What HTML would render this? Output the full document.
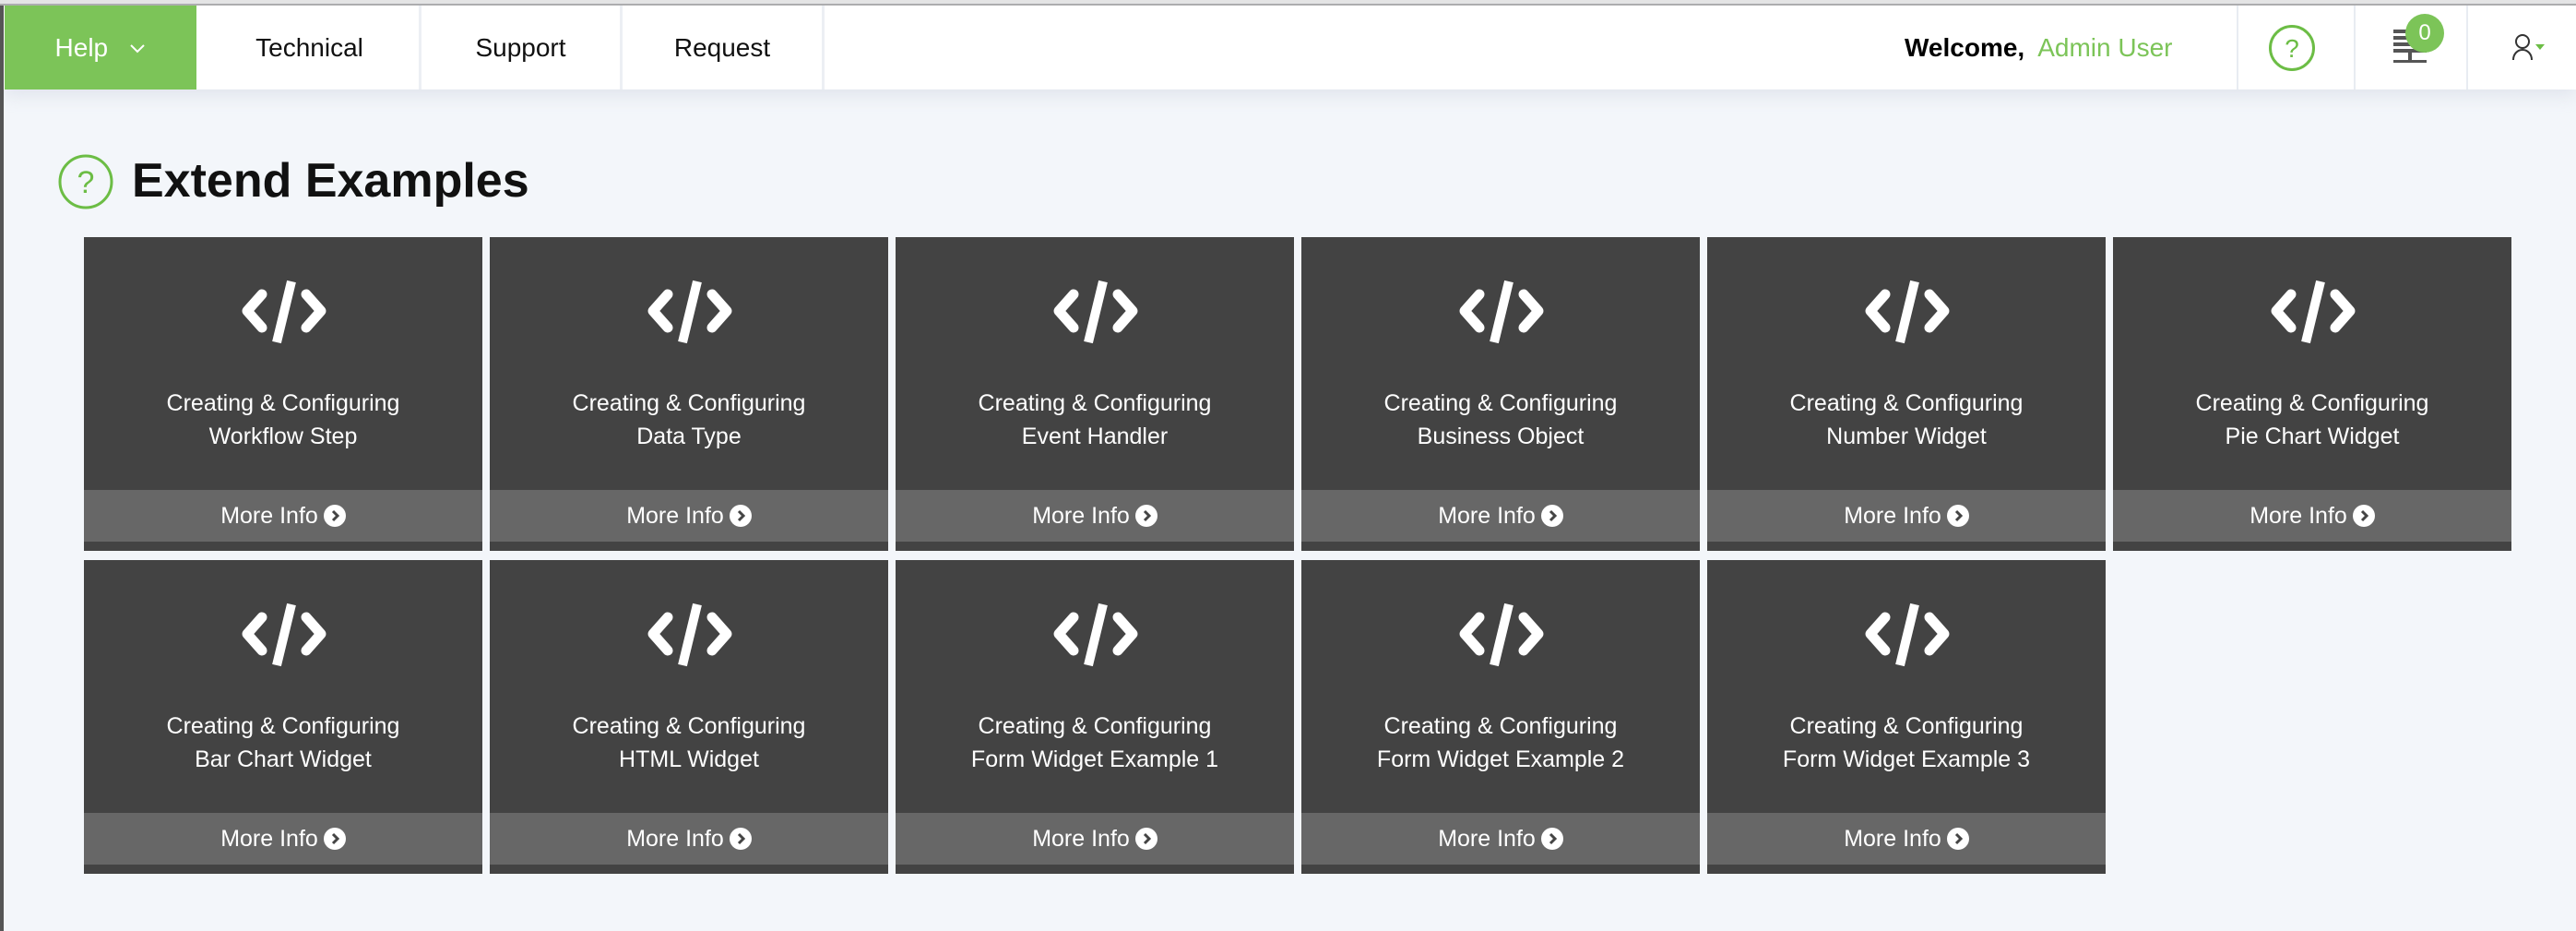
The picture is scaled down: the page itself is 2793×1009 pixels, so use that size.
<!DOCTYPE html>
<html><head><meta charset="utf-8"><style>
*{margin:0;padding:0;box-sizing:border-box}
body{width:2793px;height:1009px;overflow:hidden;background:#f3f6fa;font-family:"Liberation Sans",sans-serif;position:relative}
.topbar{position:absolute;left:0;top:0;width:2793px;height:6px;background:#e6e6e6;border-bottom:2px solid #aaa}
.leftline{position:absolute;left:0;top:6px;width:4px;height:1003px;background:#555}
.nav{position:absolute;left:4px;top:6px;width:2789px;height:91px;background:#fff;box-shadow:0 6px 18px rgba(200,205,220,.45)}
.nav .it{position:absolute;top:0;height:91px;display:flex;align-items:center;justify-content:center;font-size:28px;color:#111;border-right:3px solid #eceff4}
.help{background:#7cc458;color:#fff!important;border:none!important}
.sep{position:absolute;top:0;width:2px;height:91px;background:#e8ecf2}
h1{position:absolute;left:143px;top:166px;font-size:52px;font-weight:bold;color:#111;letter-spacing:0px}
.card{position:absolute;width:432px;height:340px;background:#434343;color:#fff;text-align:center}
.card svg.code{position:absolute;left:171px;top:44px}
.card .t{position:absolute;left:0;top:162px;width:100%;font-size:25px;line-height:36px}
.card .b{position:absolute;left:0;top:274px;width:100%;height:56px;background:#676767;font-size:25px;line-height:56px}
.card .b svg{display:inline-block;vertical-align:-4px;margin-left:6px}
</style></head><body>
<div class="topbar"></div>
<div class="nav">
 <div class="it help" style="left:1px;width:208px">Help&nbsp;&nbsp;&nbsp;<svg width="18" height="12" viewBox="0 0 18 12"><path d="M2 3l7 7 7-7" stroke="#fff" stroke-width="2" fill="none"/></svg></div>
 <div class="it" style="left:213px;width:240px">Technical</div>
 <div class="it" style="left:453px;width:218px">Support</div>
 <div class="it" style="left:671px;width:219px">Request</div>
 <div style="position:absolute;left:2061px;top:0;height:91px;line-height:91px;font-size:28px"><b>Welcome,</b>&nbsp; <span style="color:#7cc458">Admin User</span></div>
 <div class="sep" style="left:2421px"></div>
 <div class="sep" style="left:2548px"></div>
 <div class="sep" style="left:2670px"></div>
 <svg style="position:absolute;left:2455px;top:20px" width="52" height="52" viewBox="0 0 52 52"><circle cx="26" cy="26" r="23.5" stroke="#6cbd45" stroke-width="3" fill="none"/><text x="26" y="36" text-anchor="middle" font-family="Liberation Sans" font-size="28" fill="#6cbd45">?</text></svg>
 <svg style="position:absolute;left:2591px;top:26px" width="40" height="40" viewBox="0 0 40 40"><g fill="#555"><rect x="0" y="0" width="36" height="4"/><rect x="0" y="7" width="36" height="4"/><rect x="0" y="14" width="36" height="4"/><rect x="0" y="21" width="36" height="4"/><rect x="16" y="25" width="4" height="8"/><rect x="0" y="33" width="36" height="3"/></g></svg>
 <div style="position:absolute;left:2604px;top:9px;width:42px;height:42px;border-radius:50%;background:#7cc458;color:#fff;font-size:24px;line-height:42px;text-align:center">0</div>
 <svg style="position:absolute;left:2718px;top:30px" width="42" height="32" viewBox="0 0 42 32"><circle cx="13" cy="9" r="7" stroke="#333" stroke-width="2" fill="none"/><path d="M3 29c0-7 5-11 10-11s10 4 10 11" stroke="#333" stroke-width="2" fill="none"/><path d="M27 12h10l-5 6z" fill="#6cbd45"/></svg>
</div>
<div class="leftline"></div>
<svg style="position:absolute;left:63px;top:167px" width="60" height="60" viewBox="0 0 60 60"><circle cx="30" cy="30" r="28" stroke="#6cbd45" stroke-width="3" fill="none"/><text x="30" y="42" text-anchor="middle" font-family="Liberation Sans" font-size="34" fill="#6cbd45">?</text></svg>
<h1>Extend Examples</h1>
<div class="card" style="left:91px;top:257px"><svg class="code" width="92" height="74" viewBox="0 0 92 74"><path d="M22 18L6 36l16 18" stroke="#fff" stroke-width="11" fill="none" stroke-linejoin="round" stroke-linecap="round"/><path d="M70 18l16 18-16 18" stroke="#fff" stroke-width="11" fill="none" stroke-linejoin="round" stroke-linecap="round"/><path d="M54 4L38 70" stroke="#fff" stroke-width="10"/></svg><div class="t">Creating &amp; Configuring<br>Workflow Step</div><div class="b">More Info<svg width="24" height="24" viewBox="0 0 24 24"><circle cx="12" cy="12" r="12" fill="#fff"/><path d="M10 7l5 5-5 5" stroke="#444" stroke-width="3" fill="none"/></svg></div></div>
<div class="card" style="left:531px;top:257px"><svg class="code" width="92" height="74" viewBox="0 0 92 74"><path d="M22 18L6 36l16 18" stroke="#fff" stroke-width="11" fill="none" stroke-linejoin="round" stroke-linecap="round"/><path d="M70 18l16 18-16 18" stroke="#fff" stroke-width="11" fill="none" stroke-linejoin="round" stroke-linecap="round"/><path d="M54 4L38 70" stroke="#fff" stroke-width="10"/></svg><div class="t">Creating &amp; Configuring<br>Data Type</div><div class="b">More Info<svg width="24" height="24" viewBox="0 0 24 24"><circle cx="12" cy="12" r="12" fill="#fff"/><path d="M10 7l5 5-5 5" stroke="#444" stroke-width="3" fill="none"/></svg></div></div>
<div class="card" style="left:971px;top:257px"><svg class="code" width="92" height="74" viewBox="0 0 92 74"><path d="M22 18L6 36l16 18" stroke="#fff" stroke-width="11" fill="none" stroke-linejoin="round" stroke-linecap="round"/><path d="M70 18l16 18-16 18" stroke="#fff" stroke-width="11" fill="none" stroke-linejoin="round" stroke-linecap="round"/><path d="M54 4L38 70" stroke="#fff" stroke-width="10"/></svg><div class="t">Creating &amp; Configuring<br>Event Handler</div><div class="b">More Info<svg width="24" height="24" viewBox="0 0 24 24"><circle cx="12" cy="12" r="12" fill="#fff"/><path d="M10 7l5 5-5 5" stroke="#444" stroke-width="3" fill="none"/></svg></div></div>
<div class="card" style="left:1411px;top:257px"><svg class="code" width="92" height="74" viewBox="0 0 92 74"><path d="M22 18L6 36l16 18" stroke="#fff" stroke-width="11" fill="none" stroke-linejoin="round" stroke-linecap="round"/><path d="M70 18l16 18-16 18" stroke="#fff" stroke-width="11" fill="none" stroke-linejoin="round" stroke-linecap="round"/><path d="M54 4L38 70" stroke="#fff" stroke-width="10"/></svg><div class="t">Creating &amp; Configuring<br>Business Object</div><div class="b">More Info<svg width="24" height="24" viewBox="0 0 24 24"><circle cx="12" cy="12" r="12" fill="#fff"/><path d="M10 7l5 5-5 5" stroke="#444" stroke-width="3" fill="none"/></svg></div></div>
<div class="card" style="left:1851px;top:257px"><svg class="code" width="92" height="74" viewBox="0 0 92 74"><path d="M22 18L6 36l16 18" stroke="#fff" stroke-width="11" fill="none" stroke-linejoin="round" stroke-linecap="round"/><path d="M70 18l16 18-16 18" stroke="#fff" stroke-width="11" fill="none" stroke-linejoin="round" stroke-linecap="round"/><path d="M54 4L38 70" stroke="#fff" stroke-width="10"/></svg><div class="t">Creating &amp; Configuring<br>Number Widget</div><div class="b">More Info<svg width="24" height="24" viewBox="0 0 24 24"><circle cx="12" cy="12" r="12" fill="#fff"/><path d="M10 7l5 5-5 5" stroke="#444" stroke-width="3" fill="none"/></svg></div></div>
<div class="card" style="left:2291px;top:257px"><svg class="code" width="92" height="74" viewBox="0 0 92 74"><path d="M22 18L6 36l16 18" stroke="#fff" stroke-width="11" fill="none" stroke-linejoin="round" stroke-linecap="round"/><path d="M70 18l16 18-16 18" stroke="#fff" stroke-width="11" fill="none" stroke-linejoin="round" stroke-linecap="round"/><path d="M54 4L38 70" stroke="#fff" stroke-width="10"/></svg><div class="t">Creating &amp; Configuring<br>Pie Chart Widget</div><div class="b">More Info<svg width="24" height="24" viewBox="0 0 24 24"><circle cx="12" cy="12" r="12" fill="#fff"/><path d="M10 7l5 5-5 5" stroke="#444" stroke-width="3" fill="none"/></svg></div></div>
<div class="card" style="left:91px;top:607px"><svg class="code" width="92" height="74" viewBox="0 0 92 74"><path d="M22 18L6 36l16 18" stroke="#fff" stroke-width="11" fill="none" stroke-linejoin="round" stroke-linecap="round"/><path d="M70 18l16 18-16 18" stroke="#fff" stroke-width="11" fill="none" stroke-linejoin="round" stroke-linecap="round"/><path d="M54 4L38 70" stroke="#fff" stroke-width="10"/></svg><div class="t">Creating &amp; Configuring<br>Bar Chart Widget</div><div class="b">More Info<svg width="24" height="24" viewBox="0 0 24 24"><circle cx="12" cy="12" r="12" fill="#fff"/><path d="M10 7l5 5-5 5" stroke="#444" stroke-width="3" fill="none"/></svg></div></div>
<div class="card" style="left:531px;top:607px"><svg class="code" width="92" height="74" viewBox="0 0 92 74"><path d="M22 18L6 36l16 18" stroke="#fff" stroke-width="11" fill="none" stroke-linejoin="round" stroke-linecap="round"/><path d="M70 18l16 18-16 18" stroke="#fff" stroke-width="11" fill="none" stroke-linejoin="round" stroke-linecap="round"/><path d="M54 4L38 70" stroke="#fff" stroke-width="10"/></svg><div class="t">Creating &amp; Configuring<br>HTML Widget</div><div class="b">More Info<svg width="24" height="24" viewBox="0 0 24 24"><circle cx="12" cy="12" r="12" fill="#fff"/><path d="M10 7l5 5-5 5" stroke="#444" stroke-width="3" fill="none"/></svg></div></div>
<div class="card" style="left:971px;top:607px"><svg class="code" width="92" height="74" viewBox="0 0 92 74"><path d="M22 18L6 36l16 18" stroke="#fff" stroke-width="11" fill="none" stroke-linejoin="round" stroke-linecap="round"/><path d="M70 18l16 18-16 18" stroke="#fff" stroke-width="11" fill="none" stroke-linejoin="round" stroke-linecap="round"/><path d="M54 4L38 70" stroke="#fff" stroke-width="10"/></svg><div class="t">Creating &amp; Configuring<br>Form Widget Example 1</div><div class="b">More Info<svg width="24" height="24" viewBox="0 0 24 24"><circle cx="12" cy="12" r="12" fill="#fff"/><path d="M10 7l5 5-5 5" stroke="#444" stroke-width="3" fill="none"/></svg></div></div>
<div class="card" style="left:1411px;top:607px"><svg class="code" width="92" height="74" viewBox="0 0 92 74"><path d="M22 18L6 36l16 18" stroke="#fff" stroke-width="11" fill="none" stroke-linejoin="round" stroke-linecap="round"/><path d="M70 18l16 18-16 18" stroke="#fff" stroke-width="11" fill="none" stroke-linejoin="round" stroke-linecap="round"/><path d="M54 4L38 70" stroke="#fff" stroke-width="10"/></svg><div class="t">Creating &amp; Configuring<br>Form Widget Example 2</div><div class="b">More Info<svg width="24" height="24" viewBox="0 0 24 24"><circle cx="12" cy="12" r="12" fill="#fff"/><path d="M10 7l5 5-5 5" stroke="#444" stroke-width="3" fill="none"/></svg></div></div>
<div class="card" style="left:1851px;top:607px"><svg class="code" width="92" height="74" viewBox="0 0 92 74"><path d="M22 18L6 36l16 18" stroke="#fff" stroke-width="11" fill="none" stroke-linejoin="round" stroke-linecap="round"/><path d="M70 18l16 18-16 18" stroke="#fff" stroke-width="11" fill="none" stroke-linejoin="round" stroke-linecap="round"/><path d="M54 4L38 70" stroke="#fff" stroke-width="10"/></svg><div class="t">Creating &amp; Configuring<br>Form Widget Example 3</div><div class="b">More Info<svg width="24" height="24" viewBox="0 0 24 24"><circle cx="12" cy="12" r="12" fill="#fff"/><path d="M10 7l5 5-5 5" stroke="#444" stroke-width="3" fill="none"/></svg></div></div>
</body></html>
